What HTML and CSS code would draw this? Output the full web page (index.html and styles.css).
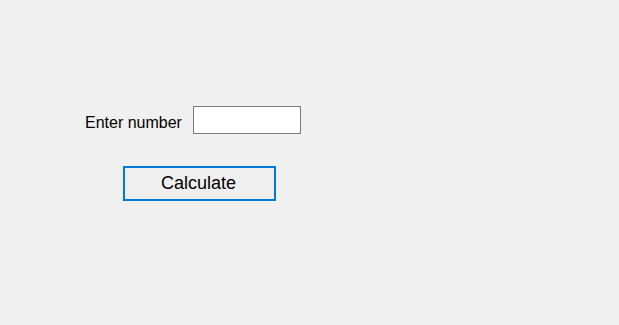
FILE: index.html
```html
<!DOCTYPE html>
<html>
<head>
<meta charset="utf-8">
<link rel="stylesheet" href="styles.css">
</head>
<body>
<div class="form">
  <div class="row">
    <label class="label" for="num">Enter number</label>
    <input class="field" id="num" type="text">
  </div>
  <button class="btn">Calculate</button>
</div>
</body>
</html>
```
FILE: styles.css
```css
html, body {
  margin: 0;
  padding: 0;
  background: #f0f0f0;
  width: 619px;
  height: 325px;
  overflow: hidden;
}
.form {
  display: flex;
  flex-direction: column;
  align-items: flex-start;
  padding: 106px 0 0 85px;
  font-family: "Liberation Sans", Arial, sans-serif;
}
.row {
  display: flex;
  align-items: center;
  height: 28px;
}
.label {
  font-size: 16px;
  color: #000;
  width: 108px;
  padding-top: 6px;
}
.field {
  box-sizing: border-box;
  width: 108px;
  height: 28px;
  margin: 0;
  padding: 0 4px;
  border: 1px solid #7a7a7a;
  background: #fff;
  outline: none;
}
.btn {
  box-sizing: border-box;
  margin: 32px 0 0 38px;
  width: 153px;
  height: 35px;
  padding: 0 2px 0 0;
  border: 2px solid #0078d7;
  background: #efefef;
  font-family: "Liberation Sans", Arial, sans-serif;
  font-size: 18px;
  color: #000;
}
```
